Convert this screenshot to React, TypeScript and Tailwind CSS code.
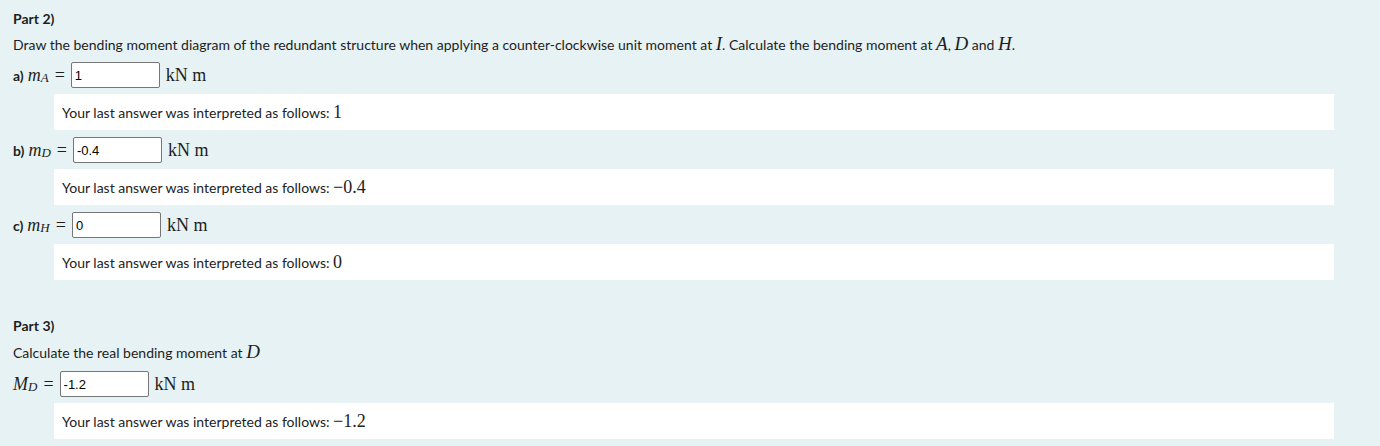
import type { ReactNode } from "react";

const sans = "font-['Lato',_'Noto_Sans',_sans-serif]";
const serif = "font-['Liberation_Serif',_'DejaVu_Serif',_serif]";

function MathI({ children }: { children: ReactNode }) {
  return <span className={`${serif} italic text-[19px] leading-[18px]`}>{children}</span>;
}

function Sym({ base, sub }: { base: string; sub: string }) {
  return (
    <span className={`${serif} italic text-[18px]`}>
      {base}
      <sub className="text-[13px] relative top-[1px]">{sub}</sub>
    </span>
  );
}

function Feedback({ value }: { value: string }) {
  return (
    <div className="ml-[41px] mr-[46px] mt-[6px] h-[36px] bg-white flex items-center pl-[8px]">
      <span className="text-[14px] text-[#222]">Your last answer was interpreted as follows:&nbsp;</span>
      <span className={`${serif} text-[18px] text-[#222]`}>{value}</span>
    </div>
  );
}

function AnswerRow({
  label,
  base,
  sub,
  value,
  shown,
  gap = "mt-[7px]",
}: {
  label?: string;
  base: string;
  sub: string;
  value: string;
  shown: string;
  gap?: string;
}) {
  return (
    <>
      <div className={`${gap} h-[26px] flex items-center`}>
        {label && <span className="font-bold text-[14px] mr-[4px]">{label}</span>}
        <Sym base={base} sub={sub} />
        <span className={`${serif} text-[18px] mx-[6px]`}>=</span>
        <input
          readOnly
          value={value}
          className="w-[89px] h-[26px] border border-[#767676] rounded-[2px] bg-white px-[3px] text-[13px] text-black outline-none font-['Liberation_Sans',_sans-serif]"
        />
        <span className={`${serif} text-[18px] ml-[6px]`}>kN m</span>
      </div>
      <Feedback value={shown} />
    </>
  );
}

export default function App() {
  return (
    <div className={`${sans} w-[1380px] h-[446px] bg-[#e6f2f4] text-[#1e1e1e] pl-[13px] pt-[10px] overflow-hidden`}>
      <h3 className="font-bold text-[14px] leading-[18px]">Part 2)</h3>
      <p className="mt-[7px] text-[14px] leading-[20px]">
        Draw the bending moment diagram of the redundant structure when applying a counter-clockwise unit moment at{" "}
        <MathI>I</MathI>. Calculate the bending moment at <MathI>A</MathI>, <MathI>D</MathI> and <MathI>H</MathI>.
      </p>
      <div className="mt-[6px]">
        <AnswerRow label="a)" base="m" sub="A" value="1" shown="1" />
        <AnswerRow label="b)" base="m" sub="D" value="-0.4" shown="−0.4" />
        <AnswerRow label="c)" base="m" sub="H" value="0" shown="0" />
      </div>
      <h3 className="mt-[37px] font-bold text-[14px] leading-[18px]">Part 3)</h3>
      <p className="mt-[8px] text-[14px] leading-[20px]">
        Calculate the real bending moment at <MathI>D</MathI>
      </p>
      <AnswerRow base="M" sub="D" value="-1.2" shown="−1.2" gap="mt-[8px]" />
    </div>
  );
}
